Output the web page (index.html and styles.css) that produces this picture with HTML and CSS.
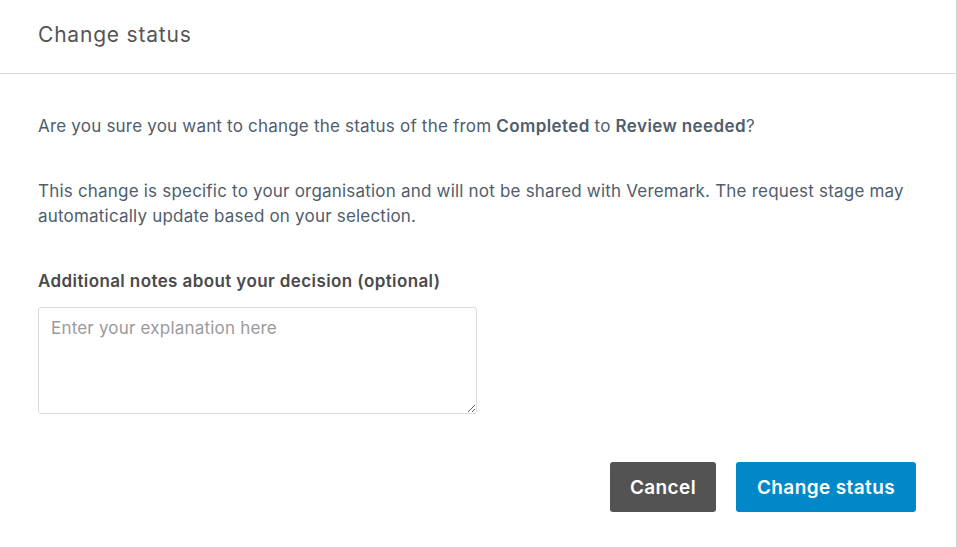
FILE: index.html
```html
<!DOCTYPE html>
<html lang="en">
<head>
<meta charset="utf-8">
<title>Change status</title>
<link rel="stylesheet" href="styles.css">
</head>
<body>
<div class="modal">
  <div class="modal-header">
    <h2 class="modal-title">Change status</h2>
  </div>
  <div class="modal-body">
    <p class="text">Are you sure you want to change the status of the from <strong>Completed</strong> to <strong>Review needed</strong>?</p>
    <p class="text second">This change is specific to your organisation and will not be shared with Veremark. The request stage may automatically update based on your selection.</p>
    <label class="label" for="notes">Additional notes about your decision (optional)</label>
    <textarea id="notes" class="notes" placeholder="Enter your explanation here"></textarea>
    <div class="actions">
      <button class="btn btn-cancel">Cancel</button>
      <button class="btn btn-primary">Change status</button>
    </div>
  </div>
</div>
</body>
</html>
```
FILE: styles.css
```css
html, body {
  margin: 0;
  padding: 0;
  background: #ffffff;
}
body {
  font-family: Inter, "Noto Sans", sans-serif;
}
.modal {
  width: 957px;
  height: 547px;
  box-sizing: border-box;
  border-right: 1px solid #d4d4d8;
  background: #fff;
}
.modal-header {
  height: 74px;
  box-sizing: border-box;
  border-bottom: 1px solid #d9d9dc;
  padding: 0 38px;
  display: flex;
  align-items: center;
}
.modal-title {
  margin: 0;
  font-size: 21px;
  font-weight: 400;
  letter-spacing: 0.8px;
  color: #555555;
  position: relative;
  top: -2px;
}
.modal-body {
  padding: 40px 40px 0 38px;
  display: flex;
  flex-direction: column;
  align-items: flex-start;
}
.text {
  margin: 0;
  font-size: 17px;
  line-height: 25px;
  letter-spacing: 0.2px;
  color: #4f5d6c;
}
.text strong {
  font-weight: 600;
  letter-spacing: 0.4px;
}
.second {
  margin-top: 40px;
}
.label {
  margin-top: 40px;
  font-size: 17px;
  line-height: 25px;
  font-weight: 600;
  letter-spacing: 0.4px;
  color: #4a4a4a;
}
.notes {
  margin-top: 13px;
  width: 439px;
  height: 107px;
  box-sizing: border-box;
  border: 1px solid #dcdce0;
  border-radius: 3px;
  padding: 9px 12px;
  font-family: Inter, "Noto Sans", sans-serif;
  font-size: 17px;
  letter-spacing: 0.2px;
  line-height: 22px;
  color: #333;
  resize: both;
}
.notes::placeholder {
  color: #9a9a9a;
}
.actions {
  align-self: stretch;
  margin-top: 48px;
  display: flex;
  justify-content: flex-end;
  gap: 20px;
}
.btn {
  height: 50px;
  border: none;
  border-radius: 3px;
  font-family: Inter, "Noto Sans", sans-serif;
  font-size: 19px;
  font-weight: 600;
  letter-spacing: 0.4px;
  color: #fff;
  padding: 0;
}
.btn-cancel {
  width: 106px;
  background: #535353;
}
.btn-primary {
  width: 180px;
  background: #0088c8;
}
```
